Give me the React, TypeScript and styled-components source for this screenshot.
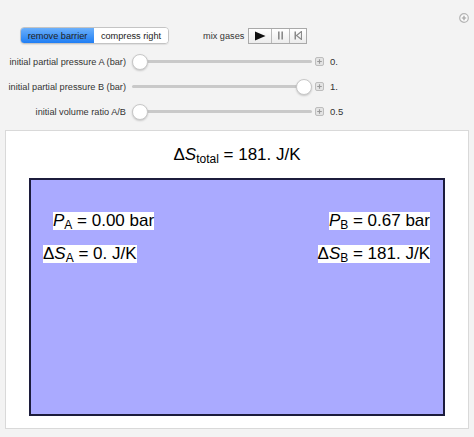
import React from 'react';
import styled, { createGlobalStyle } from 'styled-components';

const GlobalStyle = createGlobalStyle`
  html, body {
    margin: 0;
    padding: 0;
    background: #f3f3f3;
  }
`;

const Page = styled.div`
  position: relative;
  width: 474px;
  height: 437px;
  background: #f3f3f3;
  font-family: 'Liberation Sans', Arial, sans-serif;
  padding-top: 27px;
  box-sizing: border-box;
`;

const CornerPlus = styled.div`
  position: absolute;
  top: 9px;
  left: 459px;
  width: 10px;
  height: 10px;
`;

const TopRow = styled.div`
  display: flex;
  align-items: center;
  height: 17px;
  padding-left: 20px;
`;

const Segmented = styled.div`
  display: flex;
  height: 17px;
  border-radius: 4px;
  overflow: hidden;
  border: 1px solid #c4c4c4;
  box-sizing: border-box;
  box-shadow: 0 1px 1px rgba(0, 0, 0, 0.08);
`;

const SegButton = styled.div<{ $active?: boolean; $w: number }>`
  width: ${(p) => p.$w}px;
  display: flex;
  align-items: center;
  justify-content: center;
  font-size: 9.2px;
  color: #222;
  background: ${(p) =>
    p.$active ? 'linear-gradient(#6cb0fb, #1f7ef4)' : '#ffffff'};
`;

const MixLabel = styled.span`
  margin-left: 34px;
  width: 45px;
  font-size: 9.2px;
  color: #333;
  white-space: nowrap;
`;

const PlayGroup = styled.div`
  display: flex;
  height: 16px;
  border: 1px solid #a9a9a9;
  box-sizing: border-box;
  background: linear-gradient(#ffffff, #ececec);
`;

const PlayButton = styled.div<{ $w: number }>`
  width: ${(p) => p.$w}px;
  display: flex;
  align-items: center;
  justify-content: center;
  & + & {
    border-left: 1px solid #b9b9b9;
  }
`;

const SliderList = styled.div`
  margin-top: 5px;
`;

const SliderRow = styled.div`
  display: flex;
  align-items: center;
  height: 25px;
`;

const SliderLabel = styled.div`
  width: 126px;
  text-align: right;
  font-size: 9.2px;
  color: #333;
  white-space: nowrap;
`;

const Track = styled.div`
  position: relative;
  margin-left: 6px;
  width: 180px;
  height: 16px;
  display: flex;
  align-items: center;
  &::before {
    content: '';
    display: block;
    width: 100%;
    height: 3px;
    border-radius: 2px;
    background: #c9c9c9;
  }
`;

const Thumb = styled.div`
  position: absolute;
  top: 0;
  width: 16px;
  height: 16px;
  border-radius: 50%;
  background: #ffffff;
  border: 1px solid #c8c8c8;
  box-sizing: border-box;
  box-shadow: 0 1px 2px rgba(0, 0, 0, 0.18);
`;

const PlusBox = styled.div`
  margin-left: 3px;
  width: 9px;
  height: 9px;
  display: flex;
`;

const Value = styled.span`
  margin-left: 6px;
  font-size: 9.5px;
  color: #333;
`;

const Panel = styled.div`
  margin: 6px 0 0 5px;
  width: 464px;
  height: 299px;
  box-sizing: border-box;
  background: #ffffff;
  border: 1px solid #d9d9d9;
  padding-top: 14px;
`;

const Title = styled.div`
  text-align: center;
  font-size: 17px;
  line-height: 20px;
  color: #000;
`;

const Chamber = styled.div`
  margin: 13px 0 0 23px;
  width: 416px;
  height: 238px;
  box-sizing: border-box;
  background: #aaaaff;
  border: 2px solid #1c1c3c;
  padding: 32px 13px 0 0;
  display: grid;
  grid-template-columns: 1fr auto;
  grid-auto-rows: 33px;
  align-items: start;
`;

const Reading = styled.span<{ $indent?: number }>`
  justify-self: ${(p) => (p.$indent !== undefined ? 'start' : 'end')};
  margin-left: ${(p) => p.$indent ?? 0}px;
  background: #ffffff;
  font-size: 17px;
  line-height: 18px;
  color: #000;
  white-space: nowrap;
`;

const Sym = styled.i`
  font-style: italic;
`;

const Sub = styled.sub`
  font-size: 12px;
  vertical-align: -3px;
  line-height: 0;
`;

function PlusIcon() {
  return (
    <svg width="9" height="9" viewBox="0 0 9 9">
      <rect x="0.5" y="0.5" width="8" height="8" rx="1.5" fill="#e4e4e4" stroke="#bdbdbd" />
      <path d="M4.5 2.2v4.6M2.2 4.5h4.6" stroke="#9a9a9a" strokeWidth="1.1" />
    </svg>
  );
}

const sliders = [
  { label: 'initial partial pressure A (bar)', pos: 0, value: '0.' },
  { label: 'initial partial pressure B (bar)', pos: 1, value: '1.' },
  { label: 'initial volume ratio A/B', pos: 0, value: '0.5' },
];

export default function App() {
  return (
    <Page>
      <GlobalStyle />
      <CornerPlus>
        <svg width="10" height="10" viewBox="0 0 10 10">
          <circle cx="5" cy="5" r="4.3" fill="#fafafa" stroke="#b5b5b5" strokeWidth="1.2" />
          <path d="M5 2.8v4.4M2.8 5h4.4" stroke="#a0a0a0" strokeWidth="1.2" />
        </svg>
      </CornerPlus>
      <TopRow>
        <Segmented>
          <SegButton $active $w={73}>remove barrier</SegButton>
          <SegButton $w={74}>compress right</SegButton>
        </Segmented>
        <MixLabel>mix gases</MixLabel>
        <PlayGroup>
          <PlayButton $w={22}>
            <svg width="12" height="10" viewBox="0 0 12 10">
              <path d="M1 0.5L11.5 5L1 9.5Z" fill="#111" />
            </svg>
          </PlayButton>
          <PlayButton $w={17}>
            <svg width="7" height="9" viewBox="0 0 7 9">
              <rect x="1" y="0.5" width="1.6" height="8" fill="#8a8a8a" />
              <rect x="4.4" y="0.5" width="1.6" height="8" fill="#8a8a8a" />
            </svg>
          </PlayButton>
          <PlayButton $w={16}>
            <svg width="8" height="9" viewBox="0 0 8 9">
              <rect x="0.5" y="0.5" width="1.5" height="8" fill="#8a8a8a" />
              <path d="M7.5 0.5L2.5 4.5L7.5 8.5Z" fill="none" stroke="#8a8a8a" strokeWidth="1.2" />
            </svg>
          </PlayButton>
        </PlayGroup>
      </TopRow>
      <SliderList>
        {sliders.map((s) => (
          <SliderRow key={s.label}>
            <SliderLabel>{s.label}</SliderLabel>
            <Track>
              <Thumb style={{ left: `${s.pos * (180 - 16)}px` }} />
            </Track>
            <PlusBox>
              <PlusIcon />
            </PlusBox>
            <Value>{s.value}</Value>
          </SliderRow>
        ))}
      </SliderList>
      <Panel>
        <Title>
          Δ<Sym>S</Sym>
          <Sub>total</Sub> = 181. J/K
        </Title>
        <Chamber>
          <Reading $indent={22}>
            <Sym>P</Sym>
            <Sub>A</Sub> = 0.00 bar
          </Reading>
          <Reading>
            <Sym>P</Sym>
            <Sub>B</Sub> = 0.67 bar
          </Reading>
          <Reading $indent={12}>
            Δ<Sym>S</Sym>
            <Sub>A</Sub> = 0. J/K
          </Reading>
          <Reading>
            Δ<Sym>S</Sym>
            <Sub>B</Sub> = 181. J/K
          </Reading>
        </Chamber>
      </Panel>
    </Page>
  );
}
